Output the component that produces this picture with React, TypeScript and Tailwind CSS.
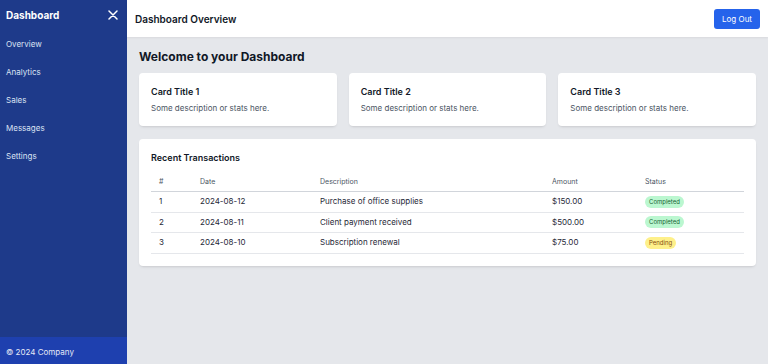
import React from 'react';

type Tx = { id: number; date: string; description: string; amount: string; status: 'Completed' | 'Pending' };

const transactions: Tx[] = [
    { id: 1, date: '2024-08-12', description: 'Purchase of office supplies', amount: '$150.00', status: 'Completed' },
    { id: 2, date: '2024-08-11', description: 'Client payment received', amount: '$500.00', status: 'Completed' },
    { id: 3, date: '2024-08-10', description: 'Subscription renewal', amount: '$75.00', status: 'Pending' },
];

const navItems = ['Overview', 'Analytics', 'Sales', 'Messages', 'Settings'];

const cards = ['Card Title 1', 'Card Title 2', 'Card Title 3'];

const CloseIcon: React.FC = () => (
    <svg width="10" height="10" viewBox="0 0 10 10" fill="none" stroke="currentColor" strokeWidth="1.5" strokeLinecap="round">
        <path d="M1 1 9 9M9 1 1 9" />
    </svg>
);

const StatusBadge: React.FC<{ status: Tx['status'] }> = ({ status }) => (
    <span
        className={`block w-fit rounded-full px-[4px] py-[2px] text-[6px] leading-[8px] ${
            status === 'Completed' ? 'bg-[#bbf7d0] text-[#166534]' : 'bg-[#fef08a] text-[#854d0e]'
        }`}
    >
        {status}
    </span>
);

const App: React.FC = () => {
    return (
        <div className="flex h-screen w-full overflow-hidden bg-[#e5e7eb] font-['Inter','Noto_Sans',sans-serif] text-[#111827]">
            {/* sidebar */}
            <aside className="flex w-[127px] shrink-0 flex-col bg-[#1e3a8a] text-white">
                <div className="flex h-[30px] items-center justify-between pl-[6px] pr-[9px]">
                    <span className="text-[10px] font-bold leading-[14px]">Dashboard</span>
                    <CloseIcon />
                </div>
                <nav className="flex flex-col">
                    {navItems.map((item) => (
                        <a key={item} className="flex h-[28px] items-center px-[6px] text-[8px] leading-[12px] text-[#dbe2f3]">
                            {item}
                        </a>
                    ))}
                </nav>
                <div className="mt-auto flex h-[27px] items-center bg-[#1e40af] px-[6px] pt-[2px] text-[8px] leading-[12px] text-[#e5e9f6]">
                    © 2024 Company
                </div>
            </aside>

            {/* main column */}
            <div className="flex min-w-0 flex-1 flex-col">
                <header className="flex h-[37px] shrink-0 items-center justify-between bg-white pl-[8px] pr-[8px] shadow-[0_1px_2px_rgba(0,0,0,0.06)]">
                    <h1 className="text-[10px] font-semibold leading-[14px]">Dashboard Overview</h1>
                    <button className="rounded-[3px] bg-[#2563eb] px-[8px] py-[4px] text-[8px] leading-[12px] text-white">
                        Log Out
                    </button>
                </header>

                <main className="flex-1 p-[12px]">
                    <h2 className="mb-[8px] text-[12px] font-bold leading-[16px]">Welcome to your Dashboard</h2>

                    <div className="grid grid-cols-3 gap-[12px]">
                        {cards.map((title) => (
                            <div key={title} className="rounded-[4px] bg-white p-[12px] shadow-[0_2px_3px_-1px_rgba(0,0,0,0.1),0_1px_2px_-1px_rgba(0,0,0,0.08)]">
                                <h3 className="text-[9px] font-semibold leading-[14px]">{title}</h3>
                                <p className="mt-[3px] text-[8px] leading-[12px] text-[#4b5563]">Some description or stats here.</p>
                            </div>
                        ))}
                    </div>

                    <div className="mt-[13px] rounded-[4px] bg-white p-[12px] shadow-[0_2px_3px_-1px_rgba(0,0,0,0.1),0_1px_2px_-1px_rgba(0,0,0,0.08)]">
                        <h3 className="text-[9px] font-semibold leading-[14px]">Recent Transactions</h3>
                        <table className="mt-[8px] w-full border-collapse text-left">
                            <thead>
                                <tr className="border-b border-[#d1d5db]">
                                    <th className="w-[41px] px-[8px] py-[4px] text-[7px] font-normal leading-[10px] text-[#4b5563]">#</th>
                                    <th className="w-[120px] px-[8px] py-[4px] text-[7px] font-normal leading-[10px] text-[#4b5563]">Date</th>
                                    <th className="w-[232px] px-[8px] py-[4px] text-[7px] font-normal leading-[10px] text-[#4b5563]">Description</th>
                                    <th className="w-[93px] px-[8px] py-[4px] text-[7px] font-normal leading-[10px] text-[#4b5563]">Amount</th>
                                    <th className="px-[8px] py-[4px] text-[7px] font-normal leading-[10px] text-[#4b5563]">Status</th>
                                </tr>
                            </thead>
                            <tbody>
                                {transactions.map((tx) => (
                                    <tr key={tx.id} className="border-b border-[#e5e7eb] text-[8px] leading-[11.5px] text-[#1f2937]">
                                        <td className="px-[8px] py-[4px]">{tx.id}</td>
                                        <td className="px-[8px] py-[4px]">{tx.date}</td>
                                        <td className="px-[8px] py-[4px]">{tx.description}</td>
                                        <td className="px-[8px] py-[4px]">{tx.amount}</td>
                                        <td className="px-[8px] py-[3.75px]">
                                            <StatusBadge status={tx.status} />
                                        </td>
                                    </tr>
                                ))}
                            </tbody>
                        </table>
                    </div>
                </main>
            </div>
        </div>
    );
};

export default App;
